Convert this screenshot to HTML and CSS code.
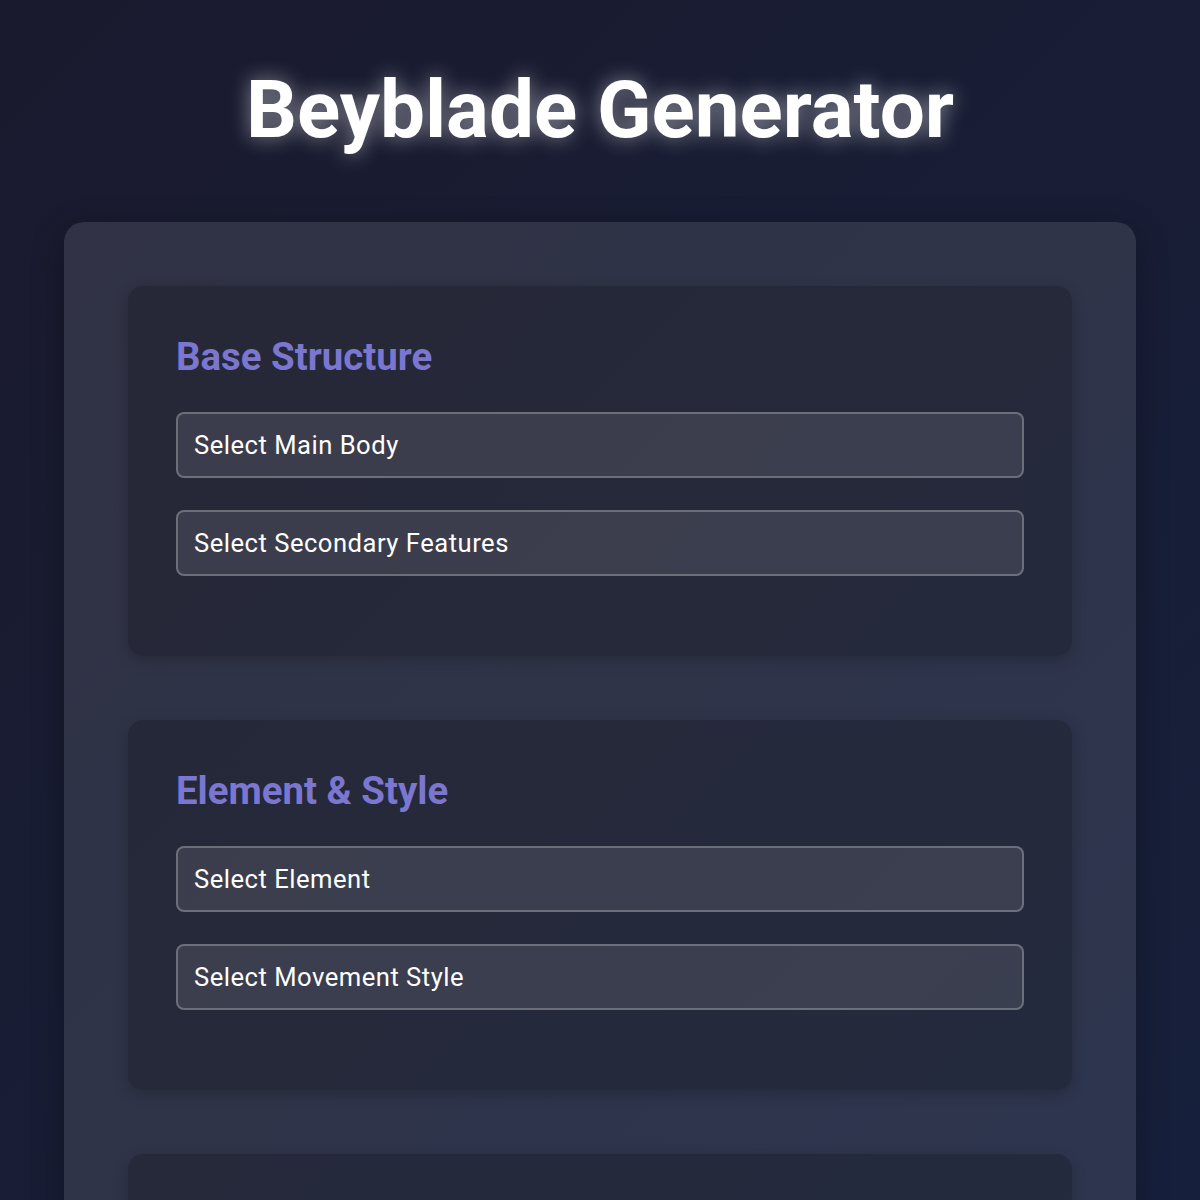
FILE: index.html
```html
<!DOCTYPE html>
<html>
<head>
    <title>Beyblade Generator</title>
    <link rel="stylesheet" href="styles.css">
</head>
<body>
    <h1 class="app-title">Beyblade Generator</h1>
    <div class="container">
        <div class="section">
            <h2 class="section-title">Base Structure</h2>
            <select class="picker">
                <option>Select Main Body</option>
            </select>
            <select class="picker">
                <option>Select Secondary Features</option>
            </select>
        </div>

        <div class="section">
            <h2 class="section-title">Element &amp; Style</h2>
            <select class="picker">
                <option>Select Element</option>
            </select>
            <select class="picker">
                <option>Select Movement Style</option>
            </select>
        </div>

        <div class="section">
            <h2 class="section-title">Special Abilities</h2>
            <select class="picker">
                <option>Select Special Move</option>
            </select>
            <select class="picker">
                <option>Select Bit-Beast</option>
            </select>
        </div>
    </div>
</body>
</html>
```

FILE: styles.css
```css
html {
    background: #1a1a2e;
}

body {
    font-family: Roboto, 'Liberation Sans', sans-serif;
    margin: 0;
    padding: 32px 0 64px;
    min-height: 100vh;
    background: linear-gradient(135deg, #1a1a2e 0%, #16213e 100%);
    color: #fff;
}

.app-title {
    text-align: center;
    font-size: 5rem;
    font-weight: 700;
    line-height: 1.2;
    margin: 30px 0 64px;
    color: #fff;
    text-shadow: 0 0 20px rgba(255, 255, 255, 0.5);
}

.container {
    max-width: 944px;
    margin: 0 auto;
    padding: 64px;
    background: rgba(255, 255, 255, 0.1);
    border-radius: 20px;
    box-shadow: 0 8px 32px rgba(0, 0, 0, 0.3);
    display: flex;
    flex-direction: column;
    gap: 64px;
}

.section {
    background: rgba(0, 0, 0, 0.2);
    border-radius: 15px;
    padding: 48px;
    box-shadow: 0 4px 15px rgba(0, 0, 0, 0.2);
}

.section-title {
    font-size: 2.4rem;
    font-weight: 700;
    line-height: 46px;
    color: #7b77d0;
    margin: 0 0 32px;
}

.picker {
    display: block;
    width: 100%;
    box-sizing: border-box;
    -webkit-appearance: none;
    appearance: none;
    font-family: Roboto, 'Liberation Sans', sans-serif;
    font-size: 1.6rem;
    letter-spacing: 0.5px;
    line-height: 30px;
    height: 66px;
    padding: 0 16px;
    margin-bottom: 32px;
    color: #fff;
    background: rgba(255, 255, 255, 0.1);
    border: 2px solid rgba(255, 255, 255, 0.25);
    border-radius: 8px;
    outline: none;
}
```
